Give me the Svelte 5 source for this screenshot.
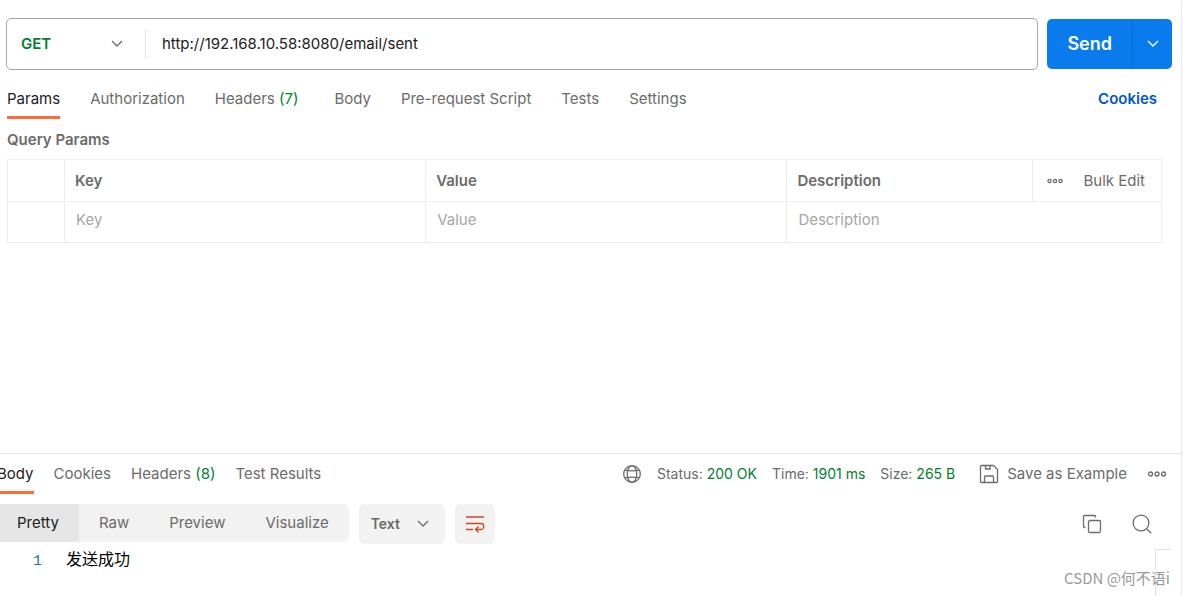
<script>
  const requestTabs = [
    { name: 'Params' },
    { name: 'Authorization' },
    { name: 'Headers', count: 7 },
    { name: 'Body' },
    { name: 'Pre-request Script' },
    { name: 'Tests' },
    { name: 'Settings' },
  ];
  const responseTabs = [
    { name: 'Body' },
    { name: 'Cookies' },
    { name: 'Headers', count: 8 },
    { name: 'Test Results' },
  ];
  const views = ['Pretty', 'Raw', 'Preview', 'Visualize'];
  const stats = [
    { label: 'Status', value: '200 OK' },
    { label: 'Time', value: '1901 ms' },
    { label: 'Size', value: '265 B' },
  ];
  const lines = ['发送成功'];

  let url = 'http://192.168.10.58:8080/email/sent';
  let requestTab = 'Params';
  let responseTab = 'Body';
  let view = 'Pretty';
</script>

<main>
  <section class="request">
    <form class="bar" on:submit|preventDefault>
      <div class="bar__field">
        <div class="picker picker--method">
          <select class="picker__select" aria-label="Method">
            <option>GET</option>
            <option>POST</option>
            <option>PUT</option>
            <option>DELETE</option>
          </select>
          <svg class="picker__arrow" width="12" height="8" viewBox="0 0 12 8">
            <path d="M1 1l5 5 5-5" />
          </svg>
        </div>
        <input class="bar__url" type="text" aria-label="Request URL" bind:value={url} />
      </div>
      <div class="send">
        <button class="send__main" type="submit">Send</button>
        <button class="send__more" type="button" aria-label="Send options">
          <svg width="12" height="8" viewBox="0 0 12 8">
            <path d="M1 1l5 5 5-5" />
          </svg>
        </button>
      </div>
    </form>

    <nav class="tabs tabs--request">
      {#each requestTabs as tab}
        <button
          class="tab"
          class:tab--active={requestTab === tab.name}
          on:click={() => (requestTab = tab.name)}
        >
          {tab.name}
          {#if tab.count}<span class="green">({tab.count})</span>{/if}
        </button>
      {/each}
      <a class="cookies" href="#cookies">Cookies</a>
    </nav>

    <h2>Query Params</h2>
    <table>
      <colgroup>
        <col class="col-check" />
        <col class="col-wide" />
        <col class="col-wide" />
        <col />
        <col class="col-actions" />
      </colgroup>
      <thead>
        <tr>
          <td></td>
          <th>Key</th>
          <th>Value</th>
          <th>Description</th>
          <td>
            <div class="actions">
              <button aria-label="More columns">
                <svg width="16" height="6" viewBox="0 0 16 6">
                  <circle cx="2.5" cy="3" r="1.6" />
                  <circle cx="8" cy="3" r="1.6" />
                  <circle cx="13.5" cy="3" r="1.6" />
                </svg>
              </button>
              <button>Bulk Edit</button>
            </div>
          </td>
        </tr>
      </thead>
      <tbody>
        <tr>
          <td></td>
          <td><input type="text" placeholder="Key" aria-label="Key" /></td>
          <td><input type="text" placeholder="Value" aria-label="Value" /></td>
          <td colspan="2">
            <input type="text" placeholder="Description" aria-label="Description" />
          </td>
        </tr>
      </tbody>
    </table>
  </section>

  <section class="response">
    <div class="response__head">
      <nav class="tabs tabs--response">
        {#each responseTabs as tab}
          <button
            class="tab"
            class:tab--active={responseTab === tab.name}
            on:click={() => (responseTab = tab.name)}
          >
            {tab.name}
            {#if tab.count}<span class="green">({tab.count})</span>{/if}
          </button>
        {/each}
      </nav>
      <div class="stats">
        <svg width="20" height="20" viewBox="0 0 20 20">
          <circle cx="10" cy="10" r="8.3" />
          <ellipse cx="10" cy="10" rx="4.8" ry="8.3" />
          <path d="M2.6 6.2q7.400 1.400 14.800 0M2.600 13.800q7.400-1.400 14.800 0" />
        </svg>
        {#each stats as stat}
          <span>{stat.label}: <span class="green">{stat.value}</span></span>
        {/each}
      </div>
      <button class="save">
        <svg width="20" height="20" viewBox="0 0 20 20">
          <path d="M2.500 1.500h12l4 4v12q0 1-1 1h-15q-1 0-1-1v-15q0-1 1-1z" />
          <path d="M6.500 1.500v3.500h4.500v-3.500M5.500 18.500v-5.500q0-1 1-1h7q1 0 1 1v5.500" />
        </svg>
        Save as Example
      </button>
      <button aria-label="More actions">
        <svg width="20" height="8" viewBox="0 0 20 8">
          <circle cx="3.5" cy="4" r="2" />
          <circle cx="10" cy="4" r="2" />
          <circle cx="16.5" cy="4" r="2" />
        </svg>
      </button>
    </div>

    <div class="toolbar">
      <div class="views">
        {#each views as name}
          <button
            class="view"
            class:view--active={view === name}
            on:click={() => (view = name)}>{name}</button
          >
        {/each}
      </div>
      <div class="picker picker--format">
        <select class="picker__select" aria-label="Format">
          <option>Text</option>
          <option>JSON</option>
          <option>HTML</option>
        </select>
        <svg class="picker__arrow" width="12" height="8" viewBox="0 0 12 8">
          <path d="M1 1l5 5 5-5" />
        </svg>
      </div>
      <button class="wrap" aria-label="Wrap lines">
        <svg width="20" height="20" viewBox="0 0 20 20">
          <path d="M1 3h18M1 9.500h14.800a3 3 0 0 1 0 6H11M1 15.500h7M13.500 12.500l-3 3 3 3" />
        </svg>
      </button>
      <div class="tools">
        <button aria-label="Copy">
          <svg width="20" height="20" viewBox="0 0 20 20">
            <rect x="6.5" y="6.5" width="12" height="12" rx="1.5" />
            <path d="M3.500 13.500h-1q-1 0-1-1v-10q0-1 1-1h10q1 0 1 1v1" />
          </svg>
        </button>
        <button aria-label="Search">
          <svg width="20" height="20" viewBox="0 0 20 20">
            <circle cx="9" cy="9" r="7.9" />
            <path d="M14.700 14.700l4.500 4.500" />
          </svg>
        </button>
      </div>
    </div>

    <div class="editor">
      <ol>
        {#each lines as line, i}
          <li><span class="editor__number">{i + 1}</span>{line}</li>
        {/each}
      </ol>
      <div class="editor__ruler"></div>
      <span class="watermark">CSDN @何不语i</span>
    </div>
  </section>
</main>

<style>
  :global(body) {
    margin: 0;
    background-color: #fff;
  }

  main {
    display: flex;
    flex-direction: column;
    box-sizing: border-box;
    margin-right: 2px;
    border-right: 1px solid #e6e6e6;
    min-height: 100vh;
    overflow: hidden;
    color: #6b6b6b;
    font-family: Inter, 'Noto Sans CJK SC', sans-serif;
    font-size: 15px;
    line-height: 20px;
  }

  button,
  input,
  select {
    margin: 0;
    border: 0;
    padding: 0;
    background: none;
    color: inherit;
    font: inherit;
  }

  button {
    white-space: nowrap;
  }

  svg {
    display: block;
    flex: none;
    fill: none;
    stroke: currentColor;
    stroke-width: 1.3;
  }

  .green {
    color: #007f31;
  }

  .request {
    flex: 1;
    padding: 18px 9px 0 6px;
  }

  .bar {
    display: flex;
    align-items: center;
    gap: 9px;
  }

  .bar__field {
    display: flex;
    flex: 1;
    align-items: center;
    border: 1px solid #a6a6a6;
    border-radius: 5px;
    height: 50px;
  }

  .bar__url {
    flex: 1;
    padding: 0 16px;
    color: #212121;
  }

  .picker {
    position: relative;
  }

  .picker__select {
    width: 100%;
    height: 100%;
    appearance: none;
    font-weight: 600;
  }

  .picker__arrow {
    position: absolute;
    top: 50%;
    right: 16px;
    transform: translateY(-50%);
    pointer-events: none;
  }

  .picker--method {
    border-right: 1px solid #e6e6e6;
    width: 138px;
    height: 30px;
  }

  .picker--method .picker__select {
    padding-left: 14px;
    color: #007f31;
  }

  .picker--method .picker__arrow {
    right: 22px;
  }

  .send {
    display: flex;
    border-radius: 5px;
    height: 50px;
    overflow: hidden;
    background-color: #097bed;
    color: #fff;
  }

  .send__main {
    padding: 0 20px;
    font-size: 18px;
    font-weight: 600;
  }

  .send__more {
    border-left: 1px solid #056bd1;
    width: 40px;
    padding: 0 14px;
  }

  .tabs {
    display: flex;
  }

  .tabs--request {
    gap: 30px;
    padding: 9px 15px 0 1px;
  }

  .tabs--request .green {
    margin-right: 6px;
  }

  .tabs--response {
    gap: 20px;
    margin-left: -3px;
  }

  .tab {
    border-bottom: 3px solid transparent;
    padding: 10px 0 7px;
  }

  .tab--active {
    border-color: #ff6c37;
    color: #212121;
  }

  .cookies {
    margin-left: auto;
    padding: 10px 0;
    color: #0056cc;
    font-weight: 600;
    text-decoration: none;
  }

  h2 {
    margin: 11px 1px 9px;
    font-size: 15px;
    font-weight: 600;
  }

  table {
    margin-left: 1px;
    border-collapse: collapse;
    width: calc(100% - 11px);
    table-layout: fixed;
  }

  .col-check {
    width: 57px;
  }

  .col-wide {
    width: 31.3%;
  }

  .col-actions {
    width: 129px;
  }

  th,
  td {
    border: 1px solid #ededed;
    padding: 0;
    height: 41px;
    text-align: left;
  }

  th {
    padding-left: 10px;
    font-weight: 600;
  }

  tbody td {
    height: 40px;
  }

  tbody input {
    box-sizing: border-box;
    padding: 0 11px 4px;
    width: 100%;
  }

  tbody input::placeholder {
    color: #a6a6a6;
    opacity: 1;
  }

  .actions {
    display: flex;
    align-items: center;
    justify-content: space-between;
    padding: 0 16px 0 14px;
  }

  .response {
    border-top: 1px solid #e6e6e6;
    min-height: 142px;
  }

  .response__head {
    display: flex;
    align-items: center;
    padding-right: 14px;
  }

  .stats {
    display: flex;
    align-items: center;
    gap: 15px;
    margin-left: auto;
    font-size: 14px;
  }

  .save {
    display: flex;
    align-items: center;
    gap: 8px;
    margin: 0 20px 0 24px;
  }

  .toolbar {
    display: flex;
    align-items: flex-start;
    gap: 10px;
    margin-top: 10px;
  }

  .views {
    display: flex;
    border-radius: 0 5px 5px 0;
    overflow: hidden;
    background-color: #f2f2f2;
  }

  .view {
    padding: 9px 20px;
  }

  .view--active {
    padding-left: 17px;
    background-color: #e6e6e6;
    color: #212121;
  }

  .picker--format {
    border-radius: 5px;
    width: 86px;
    height: 40px;
    background-color: #f2f2f2;
  }

  .picker--format .picker__select {
    padding-left: 12px;
    font-size: 14px;
  }

  .wrap {
    border-radius: 5px;
    padding: 10px;
    background-color: #f2f2f2;
    color: #d34519;
  }

  .tools {
    display: flex;
    gap: 30px;
    margin-left: auto;
    padding: 10px 29px;
  }

  .editor {
    display: flex;
    position: relative;
    justify-content: space-between;
    padding-right: 10px;
    min-height: 52px;
  }

  ol {
    margin: 5px 0 0;
    padding: 0;
    color: #000;
    font-size: 16px;
    list-style: none;
  }

  li {
    display: flex;
    align-items: baseline;
  }

  .editor__number {
    margin-right: 24px;
    width: 42px;
    color: #237893;
    font-family: 'Liberation Mono', monospace;
    font-size: 15px;
    text-align: right;
  }

  .editor__ruler {
    margin-top: 5px;
    border: solid #e0e0e0;
    border-width: 1px 0 0 1px;
    width: 15px;
  }

  .watermark {
    position: absolute;
    right: 11px;
    bottom: 8px;
    color: #999;
    font-family: 'Noto Sans CJK SC', sans-serif;
  }
</style>
